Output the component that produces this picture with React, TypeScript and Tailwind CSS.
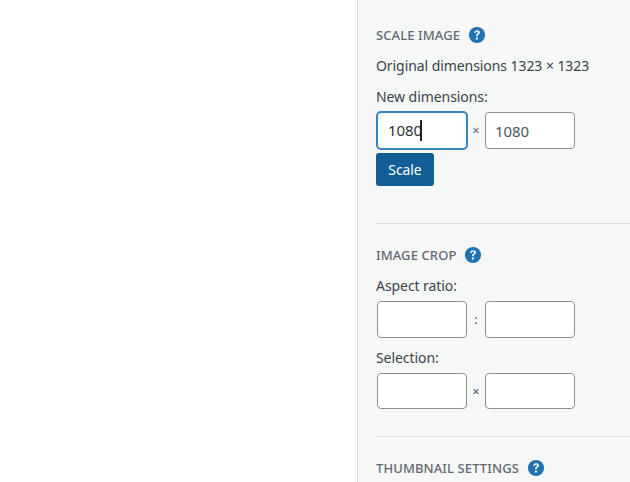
import React from "react";

const HelpIcon = () => (
  <svg viewBox="0 0 20 20" className="w-[18px] h-[18px] block" fill="#2271b1">
    <path d="M10 1a9 9 0 1 0 0 18 9 9 0 0 0 0-18Z" />
    <path
      d="M7 7.7c.1-1.8 1.4-2.9 3.2-2.9 1.800 0 3 1 3 2.500 0 1.100-.6 1.700-1.400 2.200-.8.500-1 .8-1 1.500v.4H8.900v-.5c0-1.200.4-1.800 1.300-2.400.7-.4 1-.8 1-1.300 0-.6-.4-1-1.100-1-.7 0-1.100.5-1.200 1.200L7 7.700Zm1.800 5.100h2.100v2.200H8.800v-2.200Z"
      fill="#fff"
    />
  </svg>
);

const Heading = ({ title }: { title: string }) => (
  <div className="flex items-center h-[20px]">
    <h2 className="text-[13px] font-medium tracking-[0.1px] text-[#646970] uppercase leading-[20px]">{title}</h2>
    <span className="ml-[8px] -mt-[1px]">
      <HelpIcon />
    </span>
  </div>
);

const Field = ({ value, short }: { value?: string; short?: boolean }) => (
  <input
    readOnly
    value={value ?? ""}
    className={
      short
        ? "w-[90px] h-[36px] mx-[1px] bg-white border border-[#8c8f94] rounded-[4px] px-[9px] text-[15px] text-[#50575e] outline-none"
        : "w-[90px] h-[37px] mx-[1px] bg-white border border-[#8c8f94] rounded-[4px] px-[9px] text-[15px] text-[#50575e] outline-none"
    }
  />
);

const Sep = ({ children, blue }: { children: string; blue?: boolean }) => (
  <span className={blue ? "w-[16px] text-center text-[13px] leading-none text-[#3f5f7a]" : "w-[16px] text-center text-[13px] leading-none text-[#646970]"}>
    {children}
  </span>
);

export default function App() {
  return (
    <div
      className="w-[630px] h-[482px] overflow-hidden bg-white flex"
      style={{ fontFamily: '"Noto Sans", "Open Sans", sans-serif' }}
    >
      <div className="w-[357px] shrink-0" />
      <aside className="flex-1 bg-[#f6f7f7] border-l border-[#dcdcde] pl-[18px] pt-[25px] text-[14px] tracking-[-0.07px] text-[#3c434a]">
        <Heading title="Scale Image" />
        <p className="mt-[11px] leading-[20px] whitespace-nowrap">Original dimensions 1323 × 1323</p>
        <p className="mt-[11px] leading-[20px]">New dimensions:</p>
        <div className="mt-[4px] flex items-center">
          <div className="relative w-[92px] h-[39px] bg-white border-2 border-[#3582c4] rounded-[5px] pl-[10px] text-[15px] leading-[35px] text-[#2c3338]">
            1080
            <span className="absolute left-[42px] top-[7px] w-[2px] h-[21px] bg-[#1d2327]" />
          </div>
          <Sep>×</Sep>
          <Field value="1080" />
        </div>
        <button className="mt-[3px] block w-[58px] h-[33px] bg-[#135e96] text-white rounded-[3px] text-[14px] leading-none">
          Scale
        </button>

        <hr className="mt-[37px] border-t border-[#dcdcde]" />

        <div className="mt-[21px]">
          <Heading title="Image Crop" />
        </div>
        <p className="mt-[11px] leading-[20px]">Aspect ratio:</p>
        <div className="mt-[5px] flex items-center">
          <Field />
          <Sep blue>:</Sep>
          <Field />
        </div>
        <p className="mt-[10px] leading-[20px]">Selection:</p>
        <div className="mt-[5px] flex items-center">
          <Field short />
          <Sep blue>×</Sep>
          <Field short />
        </div>

        <hr className="mt-[27px] border-t border-[#dcdcde]" />

        <div className="mt-[21px]">
          <Heading title="Thumbnail Settings" />
        </div>
      </aside>
    </div>
  );
}
